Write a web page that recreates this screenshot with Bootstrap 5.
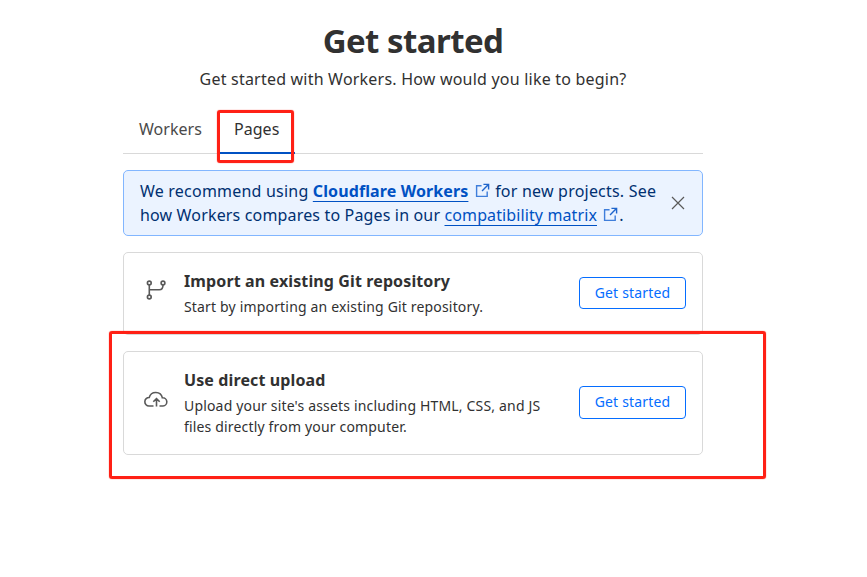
<!DOCTYPE html>
<html lang="en">
<head>
<meta charset="utf-8">
<meta name="viewport" content="width=device-width, initial-scale=1">
<title>Get started</title>
<link href="https://cdn.jsdelivr.net/npm/bootstrap@5.3.0/dist/css/bootstrap.min.css" rel="stylesheet">
<style>
body{font-family:"Noto Sans","Open Sans",sans-serif;color:#313131;font-size:16px;line-height:24px;background:#fff;overflow:hidden}
.page-col{width:580px;margin-left:123px;padding-top:20px}
.title{font-size:33px;line-height:42px;font-weight:700;color:#313131;letter-spacing:-.55px}
.intro{letter-spacing:.21px;margin-top:5px}
.tabs{height:48px;margin-top:15px;border-bottom:1px solid #d9d9d9}
.tabs .nav-link{color:#4a4a4a;padding:11px 16px 0;height:48px;border-bottom:2px solid transparent;letter-spacing:.04px}
.tabs .nav-link.active{color:#313131;border-color:#0051c3}
.notice{height:66px;margin-top:16px;padding:8px 16px;background:#ebf3ff;border:1px solid #82b6ff;border-radius:5px;color:#003071;letter-spacing:.16px}
.notice .lead-in{letter-spacing:.21px}
.notice a{color:#0051c3;text-decoration:underline;text-decoration-thickness:1px;text-underline-offset:4px;letter-spacing:.11px}
.ext{color:#3f7edb;width:15px;height:15px;margin:0 1px 0 2px;position:relative;top:-2px}
.choice{border:1px solid #d9d9d9;border-radius:5px;padding:0 16px 2px 20px}
.choice h2{font-size:16px;line-height:24px;font-weight:700;margin:0;letter-spacing:.12px}
.choice p{font-size:14px;line-height:21px;margin:3px 0 0;letter-spacing:.17px}
.choice .glyph{color:#595959;margin-bottom:6px}
.btn-start{--bs-btn-color:#056dff;--bs-btn-border-color:#056dff;--bs-btn-hover-bg:#056dff;--bs-btn-hover-color:#fff;width:107px;height:32px;padding:0;font-size:14px;line-height:28px;border-radius:4px;letter-spacing:.17px}
.choice-upload .btn-start{height:33px}
.mark-box{border:3px solid #ff2015;border-radius:3px;box-shadow:0 0 1px #ff2015;pointer-events:none}
.mark-tab{left:217px;top:110px;width:77px;height:53px}
.mark-card{left:109px;top:331px;width:657px;height:148px}
</style>
</head>
<body>
<main class="page-col">
  <h1 class="title text-center mb-0">Get started</h1>
  <p class="intro text-center mb-0">Get started with Workers. How would you like to begin?</p>
  <ul class="nav tabs">
    <li class="nav-item"><a class="nav-link" href="#">Workers</a></li>
    <li class="nav-item"><a class="nav-link active" href="#">Pages</a></li>
  </ul>
  <div class="notice d-flex align-items-center justify-content-between">
    <div class="text-nowrap">
      <div class="lead-in">We recommend using <a href="#" class="fw-bold">Cloudflare Workers</a> <svg class="ext" viewBox="0 0 16 16" fill="none" stroke="currentColor" stroke-width="1.5"><path d="M7 3H1.7v11.3H13V9"/><path stroke="#1f65cc" d="M9 1.5h5.5V7M14.3 1.7 7.5 8.5"/></svg> for new projects. See</div>
      <div>how Workers compares to Pages in our <a href="#">compatibility matrix</a> <svg class="ext" viewBox="0 0 16 16" fill="none" stroke="currentColor" stroke-width="1.5"><path d="M7 3H1.7v11.3H13V9"/><path stroke="#1f65cc" d="M9 1.5h5.5V7M14.3 1.7 7.5 8.5"/></svg>.</div>
    </div>
    <svg width="16" height="16" viewBox="0 0 16 16" fill="none" stroke="#595959" stroke-width="1.2"><path d="m2 2 12 12M14 2 2 14"/></svg>
  </div>
  <section class="choice d-flex align-items-center mt-3" style="height:83px">
    <svg class="glyph" width="24" height="24" viewBox="0 0 24 24" fill="none" stroke="currentColor" stroke-width="1.6"><circle cx="5.3" cy="5" r="1.9"/><circle cx="5.3" cy="19" r="1.9"/><circle cx="19" cy="5" r="1.9"/><path d="M5.3 6.9v10.2M5.3 11.8h10Q19 11.8 19 6.9"/></svg>
    <div class="ms-3 flex-grow-1 text-nowrap">
      <h2>Import an existing Git repository</h2>
      <p>Start by importing an existing Git repository.</p>
    </div>
    <button class="btn btn-outline-primary btn-start" type="button">Get started</button>
  </section>
  <section class="choice choice-upload d-flex align-items-center mt-3" style="height:104px">
    <svg class="glyph" width="24" height="24" viewBox="0 0 24 24" fill="none" stroke="currentColor" stroke-width="1.6"><path d="M9.5 19H5A4.2 4.2 0 0 1 5.2 10.5 6.8 6.8 0 0 1 18.4 10.8a4.1 4.1 0 0 1 .6 8.2h-3.5M12.5 19.5V12M9.3 14.8l3.2-3.2 3.2 3.2"/></svg>
    <div class="ms-3 flex-grow-1 text-nowrap">
      <h2>Use direct upload</h2>
      <p>Upload your site's assets including HTML, CSS, and JS<br>files directly from your computer.</p>
    </div>
    <button class="btn btn-outline-primary btn-start" type="button">Get started</button>
  </section>
</main>
<div class="mark-box mark-tab position-absolute"></div>
<div class="mark-box mark-card position-absolute"></div>
<script src="https://cdn.jsdelivr.net/npm/bootstrap@5.3.0/dist/js/bootstrap.bundle.min.js"></script>
</body>
</html>
